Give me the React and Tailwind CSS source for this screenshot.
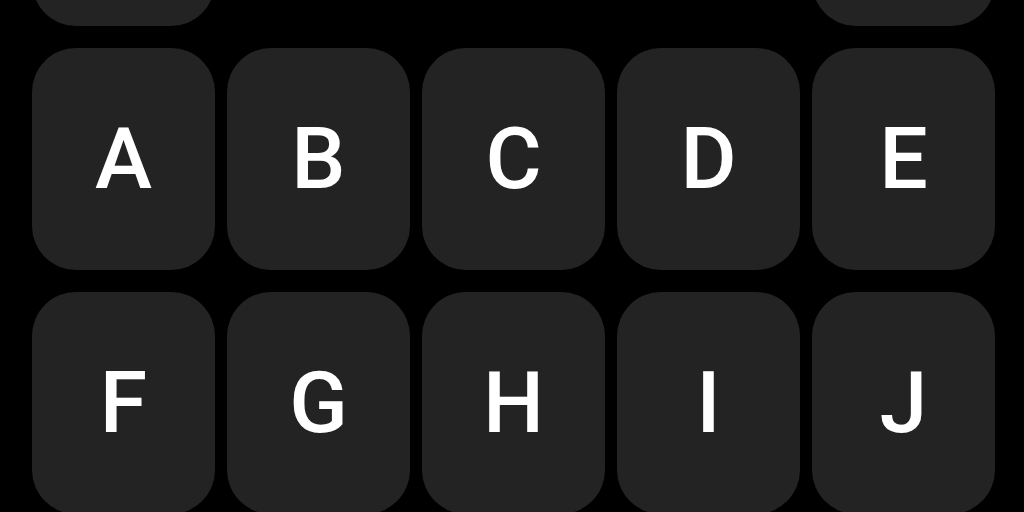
import React from "react";

const rows = [
  ["", null, null, null, ""],
  ["A", "B", "C", "D", "E"],
  ["F", "G", "H", "I", "J"],
];

const Key = ({ label }) => {
  if (label === null) {
    return <div className="h-[222px] w-[183px]" />;
  }
  return (
    <button className="h-[222px] w-[183px] rounded-[44px] bg-[#232323] flex items-center justify-center text-white text-[86px] font-medium leading-none">
      {label}
    </button>
  );
};

const App = () => {
  return (
    <div
      className="w-[1024px] h-[512px] overflow-hidden bg-black"
      style={{ fontFamily: "Roboto, 'Noto Sans', sans-serif" }}
    >
      <div className="flex flex-col gap-[22px] pl-[32px] -mt-[196px]">
        {rows.map((row, r) => (
          <div key={r} className="flex gap-[12px]">
            {row.map((label, i) => (
              <Key key={i} label={label} />
            ))}
          </div>
        ))}
      </div>
    </div>
  );
};

export default App;
